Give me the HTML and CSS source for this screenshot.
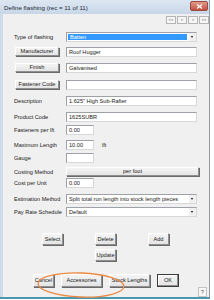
FILE: index.html
```html
<!DOCTYPE html>
<html>
<head>
<meta charset="utf-8">
<link rel="stylesheet" href="styles.css">
</head>
<body>
<div class="window">
  <div class="titlebar">
    <span class="title">Define flashing (rec = 11 of 11)</span>
    <span class="close"><svg width="7" height="5" viewBox="0 0 7 5"><path d="M1 0.5 L6 4.5 M6 0.5 L1 4.5" stroke="#fff" stroke-width="1.3"/></svg></span>
  </div>
  <div class="client">
    <div class="nav">
      <span class="navbtn">&lt;&lt;</span><span class="navbtn">&lt;</span><span class="navbtn">&gt;</span><span class="navbtn">&gt;&gt;</span>
    </div>
    <div class="form">
      <div class="label r1">Type of flashing</div>
      <div class="combo wide selected r1"><span class="val">Batten</span><span class="arrow"></span></div>

      <div class="btn lbtn r2">Manufacturer</div>
      <div class="field wide r2">Roof Hugger</div>

      <div class="btn lbtn r3">Finish</div>
      <div class="field wide r3">Galvanised</div>

      <div class="btn lbtn r4">Fastener Code</div>
      <div class="field wide r4"></div>

      <div class="label r5">Description</div>
      <div class="field wide r5">1.625" High Sub-Rafter</div>

      <div class="label r6">Product Code</div>
      <div class="field wide r6">1625SUBR</div>

      <div class="label r7">Fasteners per lft</div>
      <div class="field short r7">0.00</div>

      <div class="label r8">Maximum Length</div>
      <div class="unitrow r8"><div class="field short">10.00</div><span class="unit">lft</span></div>

      <div class="label r9">Gauge</div>
      <div class="field short r9"></div>

      <div class="label r10">Costing Method</div>
      <div class="btn costbtn r10">per foot</div>

      <div class="label r11">Cost per Unit</div>
      <div class="field short r11">0.00</div>

      <div class="label r12">Estimation Method</div>
      <div class="combo wide r12"><span class="val">Split total run length into stock length pieces</span><span class="arrow"></span></div>

      <div class="label r13">Pay Rate Schedule</div>
      <div class="combo wide r13"><span class="val">Default</span><span class="arrow"></span></div>
    </div>

    <div class="actions">
      <div class="btn abtn">Select</div>
      <div class="btn abtn">Delete</div>
      <div class="btn abtn">Add</div>
      <div class="btn abtn col2">Update</div>
    </div>

    <div class="footer">
      <div class="btn fbtn">Cancel</div>
      <div class="btn fbtn wide-btn">Accessories</div>
      <div class="btn fbtn wide-btn">Stock Lengths</div>
      <div class="btn fbtn okbtn">OK</div>
    </div>
    <div class="help">?</div>
  </div>
  <svg class="circle" width="214" height="300" viewBox="0 0 214 300">
    <ellipse cx="81" cy="285" rx="43" ry="12" transform="rotate(2 81 285)" fill="none" stroke="#ec8a43" stroke-width="1.3"/>
  </svg>
</div>
</body>
</html>
```
FILE: styles.css
```css
html, body {
  margin: 0;
  padding: 0;
  background: #ffffff;
}
body {
  width: 214px;
  height: 300px;
  overflow: hidden;
  font-family: "Liberation Sans", Arial, sans-serif;
  font-size: 5.6px;
  color: #1a1a1a;
}
.window {
  position: relative;
  width: 209px;
  height: 297px;
  background: #cfdbe8;
  border-right: 1px solid #8e9ea8;
  border-bottom: 2px solid #4b98ad;
  display: flex;
  flex-direction: column;
}
.titlebar {
  height: 15px;
  display: flex;
  align-items: center;
  justify-content: space-between;
  padding: 0 0 0 4px;
  background: linear-gradient(#dde7f2, #c7d6e7);
}
.title {
  font-size: 6.2px;
  color: #1e2a36;
  margin-top: 1px;
}
.close {
  width: 16px;
  height: 8px;
  margin-right: 1px;
  margin-top: -2px;
  background: linear-gradient(#e19a8c, #c4503e);
  border: 1px solid #9a4a40;
  border-radius: 2px;
  display: flex;
  align-items: center;
  justify-content: center;
}
.client {
  flex: 1;
  margin-left: 3px;
  background: #f0f0f0;
  display: flex;
  flex-direction: column;
}
.nav {
  display: flex;
  justify-content: flex-end;
  margin-top: 2px;
  height: 7px;
  gap: 1px;
}
.navbtn {
  width: 8px;
  height: 6px;
  border: 1px solid #b4b4b4;
  background: #f6f6f6;
  font-size: 4.2px;
  line-height: 6px;
  text-align: center;
  color: #555;
}
.form {
  display: grid;
  grid-template-columns: 52px auto;
  grid-template-rows: 15px 16px 17px 16px 16px 13px 15px 13px 14px 11px 16px 13px 10px;
  margin-top: 9px;
  margin-left: 11px;
  align-items: start;
}
.r1 { grid-row: 1; } .r2 { grid-row: 2; } .r3 { grid-row: 3; } .r4 { grid-row: 4; }
.r5 { grid-row: 5; } .r6 { grid-row: 6; } .r7 { grid-row: 7; } .r8 { grid-row: 8; }
.r9 { grid-row: 9; } .r10 { grid-row: 10; } .r11 { grid-row: 11; } .r12 { grid-row: 12; }
.r13 { grid-row: 13; }
.label {
  grid-column: 1;
  height: 10px;
  line-height: 10px;
  white-space: nowrap;
}
.field, .combo {
  grid-column: 2;
  box-sizing: border-box;
  height: 10px;
  line-height: 8px;
  background: #fff;
  border: 1px solid #9ea2a8;
  border-right-color: #d8d8d8;
  border-bottom-color: #d8d8d8;
  padding-left: 2px;
  white-space: nowrap;
  overflow: hidden;
}
.wide { width: 131px; }
.short { width: 28px; }
.combo {
  display: flex;
  padding: 0;
}
.combo .val {
  flex: 1;
  padding-left: 2px;
  overflow: hidden;
}
.combo.selected .val {
  background: #3399ff;
  color: #fff;
  margin: 1px 1px 1px 1px;
  line-height: 6px;
}
.arrow {
  width: 7px;
  position: relative;
  background: #f0f0f0;
  border-left: 1px solid #fff;
}
.arrow::after {
  content: "";
  position: absolute;
  left: 2px;
  top: 3px;
  border-left: 1.5px solid transparent;
  border-right: 1.5px solid transparent;
  border-top: 2px solid #000;
}
.unitrow {
  grid-column: 2;
  display: flex;
  align-items: center;
  gap: 8px;
}
.unit { line-height: 10px; }
.btn {
  box-sizing: border-box;
  background: linear-gradient(#f4f4f4, #e4e4e4);
  border: 1px solid;
  border-color: #ffffff #8f8f8f #8f8f8f #ffffff;
  box-shadow: 1px 1px 0 #6a6a6a;
  text-align: center;
  white-space: nowrap;
}
.lbtn {
  grid-column: 1;
  width: 44px;
  height: 9px;
  line-height: 7px;
  margin-left: 1px;
}
.costbtn {
  grid-column: 2;
  width: 133px;
  height: 9px;
  line-height: 7px;
}
.actions {
  display: grid;
  grid-template-columns: 21px 21px 21px;
  column-gap: 32px;
  row-gap: 4px;
  margin-top: 16px;
  margin-left: 39px;
}
.abtn {
  height: 12px;
  line-height: 10px;
}
.col2 { grid-column: 2; }
.footer {
  display: flex;
  gap: 7px;
  margin-top: 13px;
  margin-left: 30px;
}
.fbtn {
  width: 21px;
  height: 13px;
  line-height: 11px;
}
.wide-btn { width: 41px; }
.okbtn {
  width: 22px;
  border: 1px solid #3c3c3c;
  box-shadow: inset -1px -1px 0 #8f8f8f, inset 1px 1px 0 #fff;
}
.help {
  align-self: flex-end;
  width: 7px;
  height: 8px;
  margin-top: 0;
  margin-right: 2px;
  border: 1px solid #c4c4c4;
  font-size: 5px;
  line-height: 8px;
  text-align: center;
  color: #444;
  background: #f6f6f6;
}
.circle {
  position: absolute;
  left: 0;
  top: 0;
  pointer-events: none;
}
```
